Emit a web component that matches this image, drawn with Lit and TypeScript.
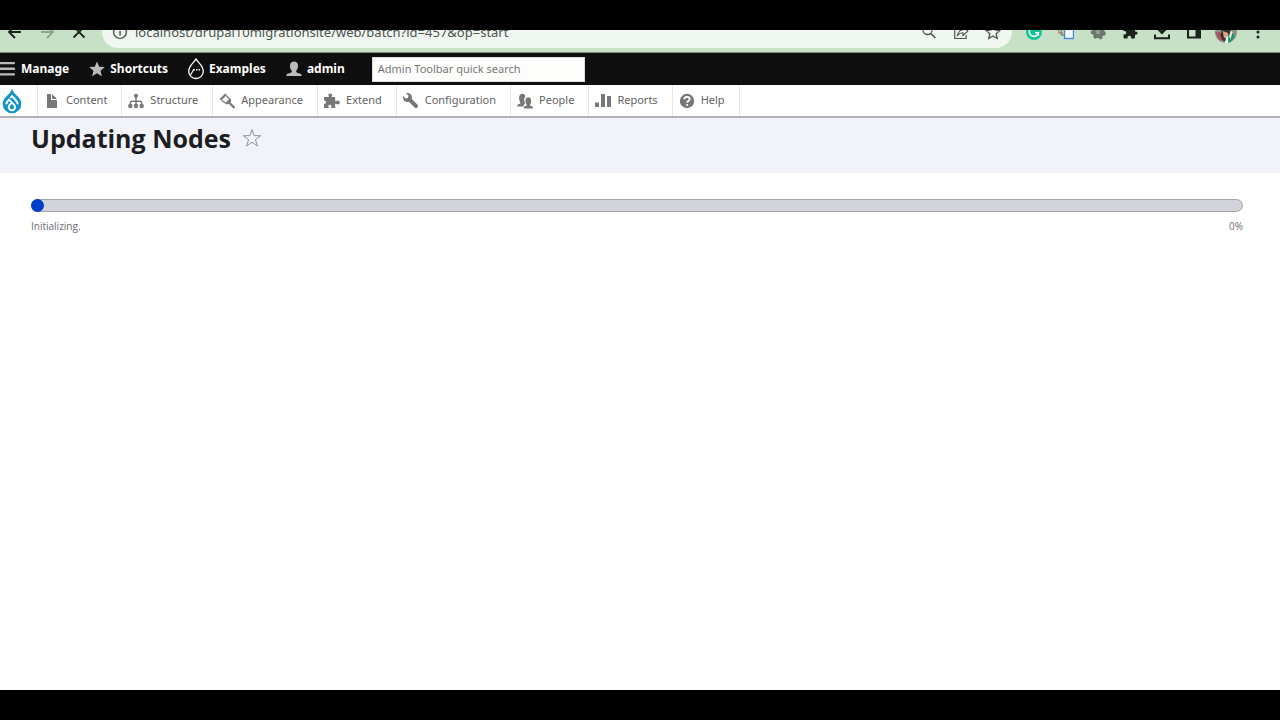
import { LitElement, html, css, svg } from "lit";
import { customElement, property } from "lit/decorators.js";

const icon = (body: unknown, size = 16, box = "0 0 16 16") =>
  html`<svg width=${size} height=${size} viewBox=${box} fill="currentColor" aria-hidden="true">${body}</svg>`;

const glyphs = {
  back: svg`<path d="M14 8H2M8 2L2 8l6 6" fill="none" stroke="currentColor" stroke-width="1.8"/>`,
  forward: svg`<path d="M2 8h12M8 2l6 6-6 6" fill="none" stroke="currentColor" stroke-width="1.8"/>`,
  stop: svg`<path d="M2.5 2.5l11 11M13.500 2.500l-11 11" fill="none" stroke="currentColor" stroke-width="1.800"/>`,
  info: svg`<circle cx="8" cy="8" r="6.400" fill="none" stroke="currentColor" stroke-width="1.400"/><path d="M7.300 4.200h1.500v1.500H7.300zM7.300 7h1.500v4.500H7.300z"/>`,
  zoom: svg`<circle cx="6.500" cy="6" r="4.500" fill="none" stroke="currentColor" stroke-width="1.300"/><path d="M9.800 9.500l4.500 4.500" stroke="currentColor" stroke-width="1.600"/>`,
  share: svg`<path d="M4 4.500H1.700v10h11.500V11" fill="none" stroke="currentColor" stroke-width="1.200"/><path d="M4.500 11.500c.5-4 2.500-5.500 5.500-5.700V3l4.800 4.200L10 11.500V8.800c-2.500 0-4 .7-5.500 2.700z" fill="none" stroke="currentColor" stroke-width="1.100"/>`,
  starLine: svg`<path d="M8 1.500l2 4.500 4.800.5-3.600 3.200 1 4.800L8 12l-4.200 2.500 1-4.800L1.200 6.500 6 6z" fill="none" stroke="currentColor" stroke-width="1.300"/>`,
  grammar: svg`<circle cx="8" cy="8" r="8" fill="#15c39a"/><path d="M11.500 4.900A4.600 4.600 0 1 0 12.400 8.700H9M12.400 8.500v3.300" fill="none" stroke="#fff" stroke-width="1.500"/>`,
  copies: svg`<path d="M1 2v7h4" fill="none" stroke="#e3645f" stroke-width="1.300"/><path d="M3.500 4v7h4" fill="none" stroke="#54a868" stroke-width="1.300"/><rect x="6.500" y="4" width="9" height="10.500" fill="#eef5ff" stroke="#4c80d8" stroke-width="1.300"/>`,
  gear: svg`<path d="M6.500 1h3l.4 2 1.700.8 1.800-1 2 2.100-1.100 1.700.5 1.500 1 .5-.3 2.700-2.100.1-1 1.300.2 1.800-2.700 1-1.100-1.400-1.900-.1-1.500.9-2.200-1.600.4-1.700-.9-1.300-1.900-.5V6.900l2-.5.700-1.600-1-1.800 2.100-1.200z" fill="#6f756f"/><circle cx="8" cy="8" r="2.300" fill="#92a091"/><path d="M9.500 11.500l2 3" stroke="#6f756f" stroke-width="2.500"/>`,
  jigsaw: svg`<path d="M14 7.500h-1V4.300C13 3.600 12.400 3 11.700 3H9V2a1.700 1.700 0 0 0-3.400 0v1H2.800C2 3 1.500 3.600 1.500 4.300V7h1a1.800 1.800 0 0 1 0 3.600h-1v2.700c0 .7.500 1.300 1.300 1.300h2.700v-1a1.800 1.800 0 0 1 3.600 0v1h2.600c.7 0 1.300-.6 1.300-1.300v-2.600h1a1.600 1.600 0 0 0 0-3.200z"/>`,
  download: svg`<path d="M8 0v8.500M4 5l4 4 4-4M1 10.500v3.700h14v-3.700" fill="none" stroke="currentColor" stroke-width="2"/>`,
  panel: svg`<path d="M1 1h14v13.500H1zM3 3v9.500h6.500V3z" fill-rule="evenodd"/>`,
  avatar: svg`<circle cx="10" cy="10" r="10" fill="#8f9188"/><path d="M0 10h5l2 7-3 1z" fill="#a8585d"/><path d="M7 5h6l2 7-2 7-6-1-2-5z" fill="#34302a"/><path d="M7 9l5 2-1 5-3-1z" fill="#d9a47f"/><path d="M12 12l4-1 2 3-4 5-3 1z" fill="#17966b"/><path d="M10 15l2-2v7h-3z" fill="#f2f4ee"/><path d="M14 9l2 1-2 7-1-3z" fill="#ece5da"/>`,
  dots: svg`<circle cx="8" cy="3" r="1.500"/><circle cx="8" cy="8" r="1.500"/><circle cx="8" cy="13" r="1.500"/>`,
  menu: svg`<rect x="-1" y="1" width="16" height="2.300" rx="1"/><rect x="-1" y="6.600" width="16" height="2.300" rx="1"/><rect x="-1" y="12.200" width="16" height="2.300" rx="1"/>`,
  star: svg`<path d="M8 .5l2.200 5.200 5.600.4-4.300 3.600 1.400 5.500L8 12.200l-4.900 3 1.400-5.500L.2 6.100l5.600-.4z"/>`,
  drop: svg`<path d="M10 1C8.200 4.300 2.700 7.700 2.700 13.200a7.300 7.300 0 0 0 14.600 0C17.300 7.700 11.800 4.300 10 1z" fill="none" stroke="#fff" stroke-width="1.300"/><path d="M4.500 17l3-5" stroke="#fff" stroke-width="1.200"/><path d="M7 10.900h1.800v1.500H7zM10 10.900h1.500v1.500H10zM12.600 10.900h1.500v1.500h-1.500z" fill="#fff"/>`,
  person: svg`<path d="M.5 15v-1.500c.5-1.500 4.800-1.200 5.300-2.800.2-.7-.3-1.200-.8-2C4.200 7.500 3.900 6 4 4.200 4.200 1.700 5.800.5 8 .5s3.800 1.200 4 3.700c.1 1.800-.2 3.300-1 4.500-.5.800-1 1.300-.8 2 .5 1.600 4.800 1.300 5.300 2.800V15z"/>`,
  logo: svg`<path d="M12 .5c-1 3.800-3.500 5.800-5.500 7.800C3.500 11.300 2.300 13.500 2.300 16.500a9.700 9.700 0 0 0 19.400 0c0-3-1.200-5.200-4.200-8.200C15.500 6.300 13 4.300 12 .5z" fill="#1295cf"/><path d="M6 16.800c0-1.800 1.200-3 2.900-4.700l5.300 5.400a3.300 3.300 0 1 1-4.600 0L12 15" fill="none" stroke="#fff" stroke-width="2"/><path d="M10.200 10.300L12 8.500l2.800 2.900c2 1.900 3.200 3.300 3.200 5.400" fill="none" stroke="#fff" stroke-width="2"/>`,
  content: svg`<path d="M12.500 7h-5c-.3 0-.5-.2-.5-.5v-5c0-.3-.2-.5-.5-.5h-3c-.300 0-.500.200-.500.500v13c0 .3.200.5.500.5h9c.3 0 .5-.2.500-.5v-7c0-.3-.2-.5-.5-.5zM8.500 6h4c.3 0 .3-.2.100-.4L8.400 1.400C8.200 1.200 8 1.200 8 1.500v4c0 .3.200.5.500.5z"/>`,
  structure: svg`<path d="M8 3v10M2.300 12.500V10c0-1 .7-1.700 1.700-1.700h8c1 0 1.700.7 1.700 1.700v2.500" fill="none" stroke="currentColor" stroke-width="1.500"/><circle cx="8" cy="2.800" r="2.100"/><circle cx="2.300" cy="13" r="2.200"/><circle cx="8" cy="13" r="2.200"/><circle cx="13.700" cy="13" r="2.200"/>`,
  appearance: svg`<path d="M6.100.4L.6 5.900l1.700 1.700 5.500-5.500z"/><path d="M7.400 2.600l3.500 4-3.300 4.100-4.900-3.200" fill="none" stroke="currentColor" stroke-width="1.300"/><path d="M8.200 8l3.200-2.500 1 2.300-1 1.400 4.200 4.200c.5.500.500 1 0 1.600s-1.200.5-1.700 0l-4.100-4.300-1.300.9-2-.9z"/>`,
  extend: svg`<path d="M0 4h4.700c.4-.3.300-.6 0-1C3.900 1.700 4.800.5 6.300.5S8.700 1.700 7.900 3c-.3.400-.4.700 0 1h3.300v3.900c.3.500.7.500 1.200.1 1.500-1 3.400-.3 3.400 1.500s-1.900 2.500-3.400 1.500c-.5-.4-.9-.4-1.200.1V15H7.500c-.5-.3-.5-.7-.2-1.200.7-1.200-.2-2.100-1.400-2.100s-2 .9-1.300 2.100c.3.500.300.9-.1 1.200H0v-4c1.300-.1 2-.7 2-1.700S1.300 7.800 0 7.600z"/>`,
  configuration: svg`<path d="M14.416 11.586l-.01-.008v-.001l-5.656-5.656c.15-.449.252-.921.252-1.421 0-2.485-2.016-4.5-4.502-4.5-.505 0-.981.102-1.434.255l2.431 2.431-.588 2.196-2.196.588-2.445-2.445c-.162.464-.268.956-.268 1.475 0 2.486 2.014 4.500 4.500 4.500.5 0 .972-.102 1.421-.251l5.667 5.665c.781.781 2.047.781 2.828 0s.781-2.047 0-2.828z"/>`,
  people: svg`<path d="M6.600 13.500H.3v-1.300c.3-1.200 2.900-1 3.100-2.200.1-.7-.6-1-.9-2.200C1.900 4.500 1.900.7 5.300.7c2.200 0 3 1.400 3 3-1.500 1.300-1.400 3.700-.6 5.600.4.800.4 1.200-.1 1.700-.6.600-1 1.200-1 2.500z"/><path d="M6.800 15.500v-1.300c.3-1.300 2.900-.9 2.900-2.200 0-.6-.6-.9-.9-2-.6-2.600-.5-5.800 2.500-5.800s3.200 3.200 2.600 5.800c-.3 1.100-.9 1.400-.9 2 0 1.300 2.500.9 2.800 2.200v1.300z"/>`,
  reports: svg`<rect x="0" y="9.500" width="4" height="4.500" rx=".5"/><rect x="6" y="1" width="4" height="13" rx=".5"/><rect x="12" y="3" width="4" height="11" rx=".5"/>`,
  help: svg`<circle cx="8" cy="8" r="7.200"/><path d="M5.300 6.300c.1-1.600 1.200-2.400 2.700-2.400s2.700.8 2.700 2.200c0 1.700-2.500 1.700-2.500 3.700M8.200 11v1.700" fill="none" stroke="#fff" stroke-width="1.800"/>`,
};

type Glyph = keyof typeof glyphs;

@customElement("browser-bar")
class BrowserBar extends LitElement {
  static styles = css`
    :host { display: block; }
    .bar {
      display: flex; align-items: flex-end; height: 18px; overflow: hidden;
      padding: 0 10px 4px 3px; background: #c6e1c6; border-bottom: 1px solid #7d887d;
    }
    .group { display: flex; gap: 8px; }
    .btn {
      display: flex; align-items: center; justify-content: center; width: 24px; height: 32px;
      padding: 0; border: 0; background: none; color: #1c211d;
    }
    .btn:disabled { color: #8ca68e; }
    .pill {
      flex: 1; min-width: 0; display: flex; align-items: center; gap: 7px; height: 32px; box-sizing: border-box;
      margin: 0 10px 0 11px; padding: 0 7px 0 10px; border-radius: 16px; background: #f0f7f1; color: #4d5450;
    }
    .pill .btn { color: #4d5450; }
    .url {
      flex: 1; min-width: 0; padding: 0; border: 0; background: none; outline: none; color: #4d5450;
      font: 13px/20px "Noto Sans", sans-serif;
    }
  `;
  btn(g: Glyph, label: string, disabled = false, size = 16, box = "0 0 16 16") {
    return html`<button class="btn" aria-label=${label} ?disabled=${disabled}>${icon(glyphs[g], size, box)}</button>`;
  }
  render() {
    return html`<div class="bar">
      <div class="group">${this.btn("back", "Back")}${this.btn("forward", "Forward", true)}${this.btn("stop", "Stop")}</div>
      <div class="pill">
        ${icon(glyphs.info)}
        <input class="url" aria-label="Address" value="localhost/drupal10migrationsite/web/batch?id=457&amp;op=start" />
        <div class="group">${this.btn("zoom", "Zoom")}${this.btn("share", "Share")}${this.btn("starLine", "Bookmark")}</div>
      </div>
      <div class="group">
        ${this.btn("grammar", "Grammar")}${this.btn("copies", "Copies")}${this.btn("gear", "Settings")}
        ${this.btn("jigsaw", "Extensions")}${this.btn("download", "Downloads")}${this.btn("panel", "Side panel")}
        ${this.btn("avatar", "Profile", false, 22, "0 0 20 20")}${this.btn("dots", "Menu")}
      </div>
    </div>`;
  }
}

@customElement("admin-toolbar")
class AdminToolbar extends LitElement {
  static styles = css`
    :host { display: block; font: 11px/16px "Noto Sans", sans-serif; }
    a { text-decoration: none; }
    .bar { display: flex; align-items: center; gap: 20px; height: 32px; background: #0f0f0f; }
    .tab { display: flex; align-items: center; gap: 5px; color: #bbb; }
    .label { color: #fff; font-size: 12px; font-weight: 700; }
    .search {
      width: 213px; height: 25px; box-sizing: border-box; margin-left: 7px; padding: 0 5px 1px;
      border: 1px solid #ddd; background: #fdfdfb; font: inherit; outline: none;
    }
    .search::placeholder { color: #777; opacity: 1; }
    .tray { display: flex; height: 31px; background: #fff; border-bottom: 2px solid #b2b2b6; }
    .home { display: flex; align-items: center; width: 37px; }
    .item {
      display: flex; align-items: center; gap: 6px; padding: 0 14px 0 6px;
      border-left: 1px solid #e6e6e6; color: #777;
    }
    .item:last-child { border-right: 1px solid #e6e6e6; }
    .text { padding-bottom: 1px; color: #626262; }
  `;
  tabs: [Glyph, string][] = [["menu", "Manage"], ["star", "Shortcuts"], ["drop", "Examples"], ["person", "admin"]];
  items: [Glyph, string][] = [
    ["content", "Content"], ["structure", "Structure"], ["appearance", "Appearance"], ["extend", "Extend"],
    ["configuration", "Configuration"], ["people", "People"], ["reports", "Reports"], ["help", "Help"],
  ];
  render() {
    return html`
      <nav class="bar" aria-label="Administration">
        ${this.tabs.map(([g, t]) => html`<a class="tab" href="#">
          ${g === "drop" ? html`<svg width="16" height="22" viewBox="2 0 16 22" aria-hidden="true">${glyphs.drop}</svg>` : icon(glyphs[g])}
          <span class="label">${t}</span></a>`)}
        <input class="search" type="search" aria-label="Admin Toolbar quick search" placeholder="Admin Toolbar quick search" />
      </nav>
      <nav class="tray" aria-label="Manage">
        <a class="home" href="#" aria-label="Home"><svg width="24" height="26" viewBox="0 0 24 27" aria-hidden="true">${glyphs.logo}</svg></a>
        ${this.items.map(([g, t]) => html`<a class="item" href="#">${icon(glyphs[g])}<span class="text">${t}</span></a>`)}
      </nav>`;
  }
}

@customElement("batch-progress")
class BatchProgress extends LitElement {
  @property({ type: Number }) value = 0;
  @property() message = "";
  static styles = css`
    :host { display: block; }
    .track { height: 13px; box-sizing: border-box; border: 1px solid #a3a4a9; border-radius: 7px; background: #d3d4d9; }
    .fill { min-width: 13px; height: 13px; margin: -1px; border-radius: 7px; background: #003ecc; }
    .row {
      display: flex; justify-content: space-between; margin-top: 6px; color: #6b6c72;
      font: 10px/16px "Open Sans", "Noto Sans", sans-serif;
    }
  `;
  render() {
    return html`
      <div class="track" role="progressbar" aria-label=${this.message} aria-valuenow=${this.value} aria-valuemin="0" aria-valuemax="100">
        <div class="fill" style="width:${this.value}%"></div>
      </div>
      <div class="row"><span>${this.message}</span><span>${this.value}%</span></div>`;
  }
}

@customElement("app-root")
class AppRoot extends LitElement {
  static styles = css`
    :host { display: flex; flex-direction: column; min-height: 100vh; box-sizing: border-box; padding: 30px 0; background: #000; }
    .page { flex: 1; background: #fff; }
    .head { display: flex; align-items: center; gap: 11px; padding: 3px 37px 18px 31px; background: #f2f3f9; }
    .title { margin: 0; color: #1c1d22; font: 700 25px/34px "Open Sans", "Noto Sans", sans-serif; }
    .fav { display: flex; padding: 0; border: 0; background: none; color: #919297; }
    .main { padding: 26px 37px 26px 31px; }
  `;
  render() {
    return html`
      <browser-bar></browser-bar>
      <admin-toolbar></admin-toolbar>
      <div class="page">
        <header class="head">
          <h1 class="title">Updating Nodes</h1>
          <button class="fav" aria-label="Add to shortcuts">
            <svg width="20" height="20" viewBox="0 0 20 20" fill="none" stroke="currentColor" aria-hidden="true">
              <path d="M10 1.500l2.100 6.200h6.600l-5.300 4 2 6.300-5.400-3.800L4.600 18l2-6.300-5.300-4h6.600z" />
            </svg>
          </button>
        </header>
        <main class="main"><batch-progress value="0" message="Initializing."></batch-progress></main>
      </div>`;
  }
}
